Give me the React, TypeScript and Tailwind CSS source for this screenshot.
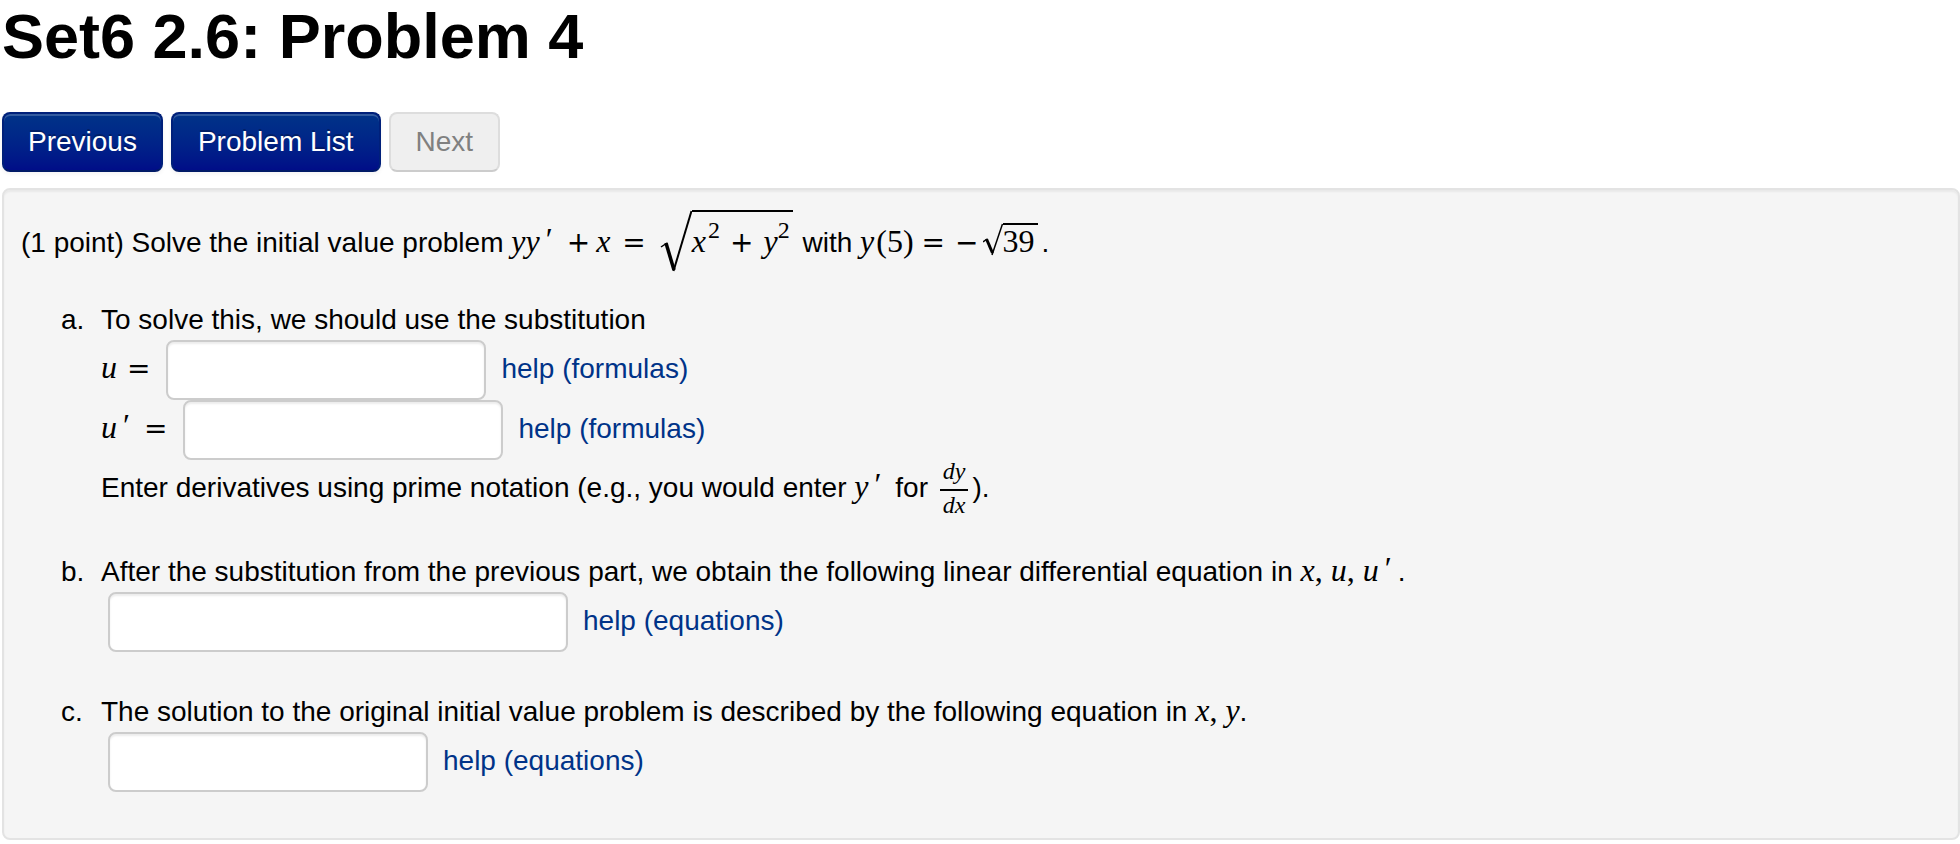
import React from 'react';

const Op = ({ children }: { children: React.ReactNode }) => (
  <span className="font-['DejaVu_Sans',sans-serif] text-[28px] leading-none">
    {children}
  </span>
);

const MathText = ({ children }: { children: React.ReactNode }) => (
  <span className="font-['Liberation_Serif',serif] text-[32px] leading-none whitespace-nowrap">
    {children}
  </span>
);

const Prime = () => <span className="mx-1.5 align-[2px]">′</span>;

const Sup = ({ children }: { children: React.ReactNode }) => (
  <span className="text-2xl leading-none align-[14px]">{children}</span>
);

const Fraction = ({ top, bottom }: { top: string; bottom: string }) => (
  <span className="mx-1 inline-flex flex-col items-center align-middle font-['Liberation_Serif',serif] text-2xl italic">
    <span className="px-[3px] pb-2 leading-5">{top}</span>
    <span className="border-t-2 border-black px-[3px] leading-7">
      {bottom}
    </span>
  </span>
);

const HelpLink = ({ topic }: { topic: string }) => (
  <a href="#" className="ml-[15px] text-[#003388] hover:underline">
    help ({topic})
  </a>
);

const AnswerInput = ({ id, wide }: { id: string; wide?: boolean }) => (
  <input
    id={id}
    type="text"
    className={`${
      wide ? 'w-[460px]' : 'w-80'
    } h-15 rounded-lg border-2 border-[#cccccc] bg-white px-3 shadow-[inset_0_2px_2px_rgba(0,0,0,0.075)]`}
  />
);

const ProblemPage = () => {
  return (
    <div className="min-h-screen bg-white pl-0.5 font-['Liberation_Sans',sans-serif] text-[28px] leading-10 text-black">
      <h1 className="text-[63px] leading-[72px] font-bold">
        Set6 2.6: Problem 4
      </h1>

      {/* Navigation */}
      <div className="mt-10 flex gap-2">
        <button className="h-15 rounded-lg border-2 border-[#00207a] border-b-[#001a66] bg-linear-to-b from-[#003388] to-[#000d88] px-6 text-white shadow-[inset_0_2px_0_rgba(255,255,255,0.2),0_2px_4px_rgba(0,0,0,0.05)] [text-shadow:0_-2px_0_rgba(0,0,0,0.25)]">
          Previous
        </button>
        <button className="h-15 rounded-lg border-2 border-[#00207a] border-b-[#001a66] bg-linear-to-b from-[#003388] to-[#000d88] px-[25px] text-white shadow-[inset_0_2px_0_rgba(255,255,255,0.2),0_2px_4px_rgba(0,0,0,0.05)] [text-shadow:0_-2px_0_rgba(0,0,0,0.25)]">
          Problem List
        </button>
        <button
          disabled
          className="h-15 rounded-lg border-2 border-[#dddddd] border-b-[#cccccc] bg-[#efefef] px-[25px] text-[#808080]"
        >
          Next
        </button>
      </div>

      {/* Problem */}
      <div className="mt-4 rounded-lg border-2 border-[#e3e3e3] bg-[#f5f5f5] pt-5 pr-4 pb-[46px] pl-[17px] shadow-[inset_0_2px_2px_rgba(0,0,0,0.05)]">
        <p>
          (1 point) Solve the initial value problem{' '}
          <MathText>
            <i>yy</i>
            <Prime />
            <span className="ml-2">
              <Op>+</Op>
            </span>
            <i className="mr-3 ml-1.5">x</i>
            <Op>=</Op>
            <span className="mr-0.5 ml-3.5 inline-flex items-baseline">
              <svg
                className="h-[62px] w-8 self-start"
                viewBox="0 0 32 62"
                fill="none"
                stroke="black"
              >
                <path d="M1 37l6-4" strokeWidth="1.5" />
                <path d="M6 33l8 27" strokeWidth="3.5" />
                <path d="M13.500 61L31.500 1" strokeWidth="2" />
              </svg>
              <span className="border-t-2 border-black pr-[3px] leading-[58px]">
                <i className="mr-0.5">x</i>
                <Sup>2</Sup>
                <span className="mx-2.5">
                  <Op>+</Op>
                </span>
                <i>y</i>
                <Sup>2</Sup>
              </span>
            </span>
          </MathText>{' '}
          with{' '}
          <MathText>
            <i className="mr-0.5">y</i>(5)
            <span className="mr-2.5 ml-2">
              <Op>=</Op>
            </span>
            <Op>−</Op>
            <span className="mx-1 inline-flex items-baseline">
              <svg
                className="h-[34px] w-5 self-start"
                viewBox="0 0 20 34"
                fill="none"
                stroke="black"
              >
                <path d="M0 19l4-3" strokeWidth="1.5" />
                <path d="M3.500 16l6 14" strokeWidth="3" />
                <path d="M9 32L19.500 1" strokeWidth="1.500" />
              </svg>
              <span className="border-t-2 border-black pr-[3px] leading-8">
                39
              </span>
            </span>
          </MathText>
          .
        </p>

        <ol className="mt-7 pl-10">
          <li className="flex">
            <span className="w-10 shrink-0">a.</span>
            <div>
              <p>To solve this, we should use the substitution</p>
              <div className="flex items-start leading-[58px]">
                <label htmlFor="answer-u" className="mr-4">
                  <MathText>
                    <i className="mr-2.5">u</i>
                    <Op>=</Op>
                  </MathText>
                </label>
                <AnswerInput id="answer-u" />
                <HelpLink topic="formulas" />
              </div>
              <div className="flex items-start leading-[58px]">
                <label htmlFor="answer-du" className="mr-4">
                  <MathText>
                    <i>u</i>
                    <Prime />
                    <span className="ml-2">
                      <Op>=</Op>
                    </span>
                  </MathText>
                </label>
                <AnswerInput id="answer-du" />
                <HelpLink topic="formulas" />
              </div>
              <p className="leading-14">
                Enter derivatives using prime notation (e.g., you would enter{' '}
                <MathText>
                  <i>y</i>
                  <Prime />
                </MathText>{' '}
                for <Fraction top="dy" bottom="dx" />
                ).
              </p>
            </div>
          </li>

          <li className="mt-[33px] flex">
            <span className="w-10 shrink-0">b.</span>
            <div>
              <label htmlFor="answer-equation" className="block">
                After the substitution from the previous part, we obtain the
                following linear differential equation in{' '}
                <MathText>
                  <i>x</i>, <i>u</i>, <i>u</i>
                  <Prime />
                </MathText>
                .
              </label>
              <div className="ml-[7px] flex items-start leading-[58px]">
                <AnswerInput id="answer-equation" wide />
                <HelpLink topic="equations" />
              </div>
            </div>
          </li>

          <li className="mt-10 flex">
            <span className="w-10 shrink-0">c.</span>
            <div>
              <label htmlFor="answer-solution" className="block">
                The solution to the original initial value problem is described
                by the following equation in{' '}
                <MathText>
                  <i>x</i>, <i>y</i>
                </MathText>
                .
              </label>
              <div className="ml-[7px] flex items-start leading-[58px]">
                <AnswerInput id="answer-solution" />
                <HelpLink topic="equations" />
              </div>
            </div>
          </li>
        </ol>
      </div>
    </div>
  );
};

export default ProblemPage;
